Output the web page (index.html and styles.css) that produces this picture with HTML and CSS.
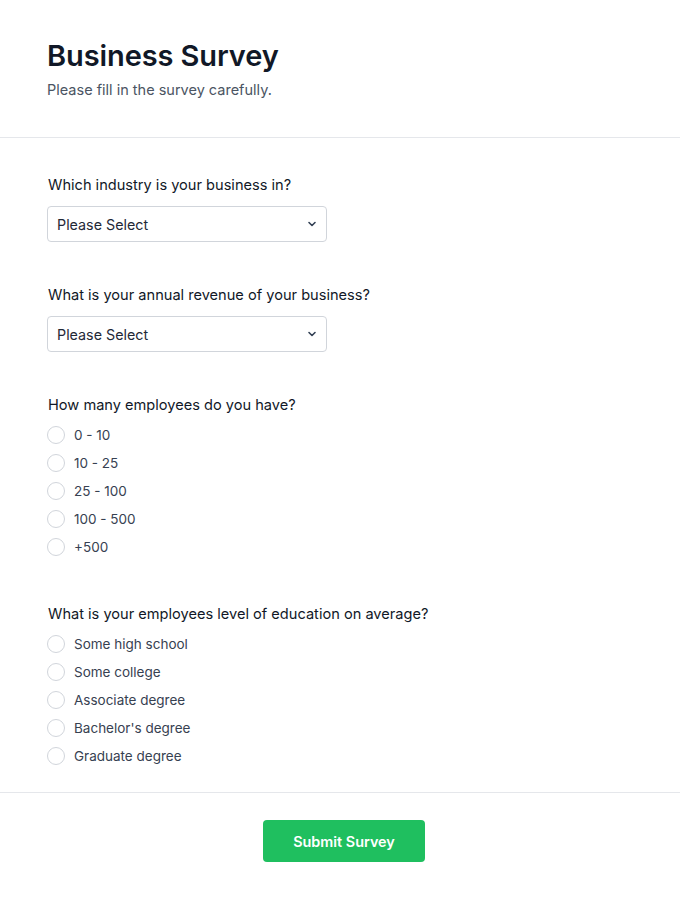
FILE: index.html
```html
<!DOCTYPE html>
<html lang="en">
<head>
    <meta charset="UTF-8">
    <meta name="viewport" content="width=device-width, initial-scale=1.0">
    <title>Business Survey</title>
    <link rel="stylesheet" href="styles.css">
</head>
<body>
    <div class="header">
        <h1>Business Survey</h1>
        <p>Please fill in the survey carefully.</p>
    </div>
    <form class="survey">
        <div class="question">
            <label class="q-label" for="industry">Which industry is your business in?</label>
            <div class="select-wrap">
                <select id="industry">
                    <option>Please Select</option>
                </select>
                <svg class="chevron" width="10" height="10" viewBox="0 0 10 10"><path d="M2 3.5 L5 6.5 L8 3.5" fill="none" stroke="#334155" stroke-width="1.6" stroke-linecap="round" stroke-linejoin="round"/></svg>
            </div>
        </div>
        <div class="question">
            <label class="q-label" for="revenue">What is your annual revenue of your business?</label>
            <div class="select-wrap">
                <select id="revenue">
                    <option>Please Select</option>
                </select>
                <svg class="chevron" width="10" height="10" viewBox="0 0 10 10"><path d="M2 3.5 L5 6.5 L8 3.5" fill="none" stroke="#334155" stroke-width="1.6" stroke-linecap="round" stroke-linejoin="round"/></svg>
            </div>
        </div>
        <div class="question radio-q">
            <div class="q-label">How many employees do you have?</div>
            <div class="radios">
                <label class="radio"><input type="radio" name="emp"><span class="dot"></span>0 - 10</label>
                <label class="radio"><input type="radio" name="emp"><span class="dot"></span>10 - 25</label>
                <label class="radio"><input type="radio" name="emp"><span class="dot"></span>25 - 100</label>
                <label class="radio"><input type="radio" name="emp"><span class="dot"></span>100 - 500</label>
                <label class="radio"><input type="radio" name="emp"><span class="dot"></span>+500</label>
            </div>
        </div>
        <div class="question radio-q">
            <div class="q-label">What is your employees level of education on average?</div>
            <div class="radios">
                <label class="radio"><input type="radio" name="edu"><span class="dot"></span>Some high school</label>
                <label class="radio"><input type="radio" name="edu"><span class="dot"></span>Some college</label>
                <label class="radio"><input type="radio" name="edu"><span class="dot"></span>Associate degree</label>
                <label class="radio"><input type="radio" name="edu"><span class="dot"></span>Bachelor's degree</label>
                <label class="radio"><input type="radio" name="edu"><span class="dot"></span>Graduate degree</label>
            </div>
        </div>
    </form>
    <div class="footer">
        <button type="button" class="submit">Submit Survey</button>
    </div>
</body>
</html>
```

FILE: styles.css
```css
body {
    margin: 0;
    font-family: Inter, "Noto Sans", sans-serif;
    color: #111827;
    background: #fff;
}
.header {
    padding: 38px 47px 37px;
    border-bottom: 1px solid #e5e7eb;
}
.header h1 {
    margin: 0;
    font-size: 29px;
    line-height: 36px;
    font-weight: 600;
    color: #111827;
    letter-spacing: -0.1px;
}
.header p {
    margin: 6px 0 0;
    font-size: 14.5px;
    line-height: 20px;
    color: #4b5563;
}
.survey {
    padding: 37px 47px 26px;
    border-bottom: 1px solid #e5e7eb;
}
.question {
    margin-bottom: 43px;
}
.question.radio-q {
    margin-bottom: 47px;
}
.question:last-child {
    margin-bottom: 0;
}
.q-label {
    display: block;
    margin: 0 0 11px 1px;
    font-size: 14.6px;
    line-height: 20px;
    font-weight: 400;
    color: #111827;
}
.select-wrap {
    position: relative;
    width: 280px;
}
.select-wrap select {
    appearance: none;
    -webkit-appearance: none;
    width: 100%;
    height: 36px;
    padding: 0 9px;
    font-family: inherit;
    font-size: 14.3px;
    color: #1f2937;
    background: #fff;
    border: 1px solid #d1d5db;
    border-radius: 4px;
}
.chevron {
    position: absolute;
    right: 10px;
    top: 13px;
    pointer-events: none;
}
.radios {
    display: flex;
    flex-direction: column;
    gap: 8px;
    margin-top: -1px;
}
.radio {
    display: flex;
    align-items: center;
    height: 20px;
    font-size: 13.5px;
    color: #374151;
}
.radio input {
    display: none;
}
.dot {
    width: 18px;
    height: 18px;
    border: 1px solid #d1d5db;
    border-radius: 50%;
    margin-right: 9px;
    box-sizing: border-box;
    flex: none;
}
.footer {
    display: flex;
    justify-content: center;
    padding: 27px 0 37px 8px;
}
.submit {
    width: 162px;
    height: 42px;
    border: none;
    border-radius: 4px;
    background: #1fbf5f;
    color: #fff;
    font-family: inherit;
    font-size: 14.4px;
    font-weight: 600;
    cursor: pointer;
}
```
